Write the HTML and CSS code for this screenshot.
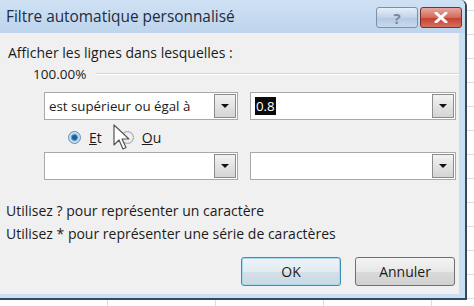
FILE: index.html
```html
<!DOCTYPE html>
<html lang="fr">

<head>
    <meta charset="UTF-8">
    <meta name="viewport" content="width=device-width, initial-scale=1.0">
    <title>Filtre automatique personnalisé</title>

    <link rel="stylesheet" href="styles.css">
</head>

<body>
    <div class="window">
        <div class="titlebar">
            <span class="title">Filtre automatique personnalisé</span>
            <div class="caption-btns">
                <button type="button" class="btn-help">?</button>
                <button type="button" class="btn-close">
                    <svg width="14" height="11" viewBox="0 0 14 11">
                        <path d="M2 1 L12 10 M12 1 L2 10" stroke="#fff" stroke-width="3" stroke-linecap="round" />
                    </svg>
                </button>
            </div>
        </div>

        <div class="dialog">
            <p class="intro">Afficher les lignes dans lesquelles :</p>

            <div class="group">
                <span class="group-label">100.00%</span>
                <span class="group-line"></span>
            </div>

            <div class="row">
                <div class="combo combo-left">
                    <span class="combo-value">est supérieur ou égal à</span>
                    <span class="combo-arrow"></span>
                </div>
                <div class="combo combo-right">
                    <span class="combo-value"><span class="selected">0.8</span></span>
                    <span class="combo-arrow"></span>
                </div>
            </div>

            <div class="logic">
                <label class="option">
                    <span class="radio checked"></span>
                    <span><u>E</u>t</span>
                </label>
                <label class="option">
                    <span class="radio"></span>
                    <span><u>O</u>u</span>
                </label>
                <!-- pointeur de la souris -->
                <svg class="cursor" width="18" height="27" viewBox="0 0 18 27">
                    <path d="M1 1 L1 21 L6 16 L10 25 L13 23.5 L9 15 L16 15 Z" fill="#fff" stroke="#555" stroke-width="1.2" stroke-linejoin="round" />
                </svg>
            </div>

            <div class="row row-second">
                <div class="combo combo-left">
                    <span class="combo-value"></span>
                    <span class="combo-arrow"></span>
                </div>
                <div class="combo combo-right">
                    <span class="combo-value"></span>
                    <span class="combo-arrow"></span>
                </div>
            </div>

            <p class="hint">Utilisez ? pour représenter un caractère</p>
            <p class="hint hint-second">Utilisez * pour représenter une série de caractères</p>

            <div class="actions">
                <button type="button" class="btn btn-default">OK</button>
                <button type="button" class="btn">Annuler</button>
            </div>
        </div>
    </div>
</body>

</html>
```

FILE: styles.css
```css
/* commun */
* {
    box-sizing: border-box;
}

body {
    margin: 0;
    width: 474px;
    height: 306px;
    overflow: hidden;
    background-color: #fff;
    background-image:
        linear-gradient(#dcdcdc 1px, transparent 1px),
        linear-gradient(90deg, #dcdcdc 1px, transparent 1px);
    background-size: 108px 24px;
    background-position: 107px 10px;
    font-family: "Open Sans", "Noto Sans", sans-serif;
    color: #1b1b1b;
}

p {
    margin: 0;
}

button {
    font-family: inherit;
    cursor: pointer;
}

/* fenetre */
.window {
    width: 467px;
    height: 300px;
    display: flex;
    flex-direction: column;
    background: #cadff3;
    border-right: 2px solid #34495c;
    border-bottom: 2px solid #34495c;
    border-top-right-radius: 6px;
    padding: 0 6px 4px 0;
}

.titlebar {
    height: 33px;
    margin-right: -6px;
    display: flex;
    align-items: center;
    justify-content: space-between;
    padding: 0 3px 0 6px;
    background: linear-gradient(#cfe1f4, #bdd4ec);
    border-top-right-radius: 6px;
}

.title {
    font-size: 15.4px;
    color: #1d2c3f;
}

.caption-btns {
    display: flex;
    gap: 2px;
    margin-top: 2px;
}

.btn-help,
.btn-close {
    height: 21px;
    padding: 0;
    border-radius: 3px;
    display: flex;
    align-items: center;
    justify-content: center;
}

.btn-help {
    width: 42px;
    border: 1px solid #7d90a8;
    background: linear-gradient(#e6eef8, #c3d3e6 50%, #b4c8df 51%, #c8d9ec);
    color: #7388a2;
    font-size: 15px;
    font-weight: bold;
}

.btn-close {
    width: 42px;
    border: 1px solid #7a3029;
    background: linear-gradient(#e8a79e, #d36a5d 50%, #c2402f 51%, #d5705f);
}

.dialog {
    flex: 1;
    display: flex;
    flex-direction: column;
    background: #f0f0f0;
    font-size: 14px;
}

.intro {
    margin: 11px 0 0 8px;
    line-height: 18px;
}

.group {
    display: flex;
    align-items: center;
    margin-top: 3px;
    padding-left: 33px;
    height: 18px;
    font-size: 13.5px;
}

.group-line {
    flex: 1;
    height: 2px;
    margin-left: 10px;
    border-top: 1px solid #d5d5d5;
    border-bottom: 1px solid #fff;
}

/* listes deroulantes */
.row {
    display: flex;
    gap: 12px;
    margin-top: 9px;
    padding-left: 44px;
}

.row-second {
    margin-top: 4px;
}

.combo {
    height: 28px;
    display: flex;
    background: #fff;
    border: 1px solid #a9a9a9;
    padding: 1px;
}

.combo-left {
    width: 194px;
}

.combo-right {
    width: 206px;
}

.combo-value {
    flex: 1;
    display: flex;
    align-items: center;
    padding-left: 3px;
    font-size: 13.3px;
    white-space: nowrap;
    overflow: hidden;
}

.selected {
    background: #0b0b0b;
    color: #fff;
    padding: 0 1px;
}

.combo-arrow {
    width: 22px;
    border: 1px solid #8c8c8c;
    background: linear-gradient(#f2f2f2, #d4d4d4);
    display: flex;
    align-items: center;
    justify-content: center;
}

.combo-arrow::after {
    content: "";
    border-left: 4px solid transparent;
    border-right: 4px solid transparent;
    border-top: 4px solid #111;
}

/* et / ou */
.logic {
    position: relative;
    height: 22px;
    margin-top: 6px;
    display: flex;
    align-items: center;
    gap: 19px;
    padding-left: 68px;
    font-size: 14px;
}

.option {
    display: flex;
    align-items: center;
    gap: 8px;
}

.radio {
    width: 13px;
    height: 13px;
    border-radius: 50%;
    border: 1px solid #9aa3ad;
    background: radial-gradient(#fff, #dcdcdc);
}

.radio.checked {
    border-color: #5b8fbc;
    background: radial-gradient(#1f5f96 0 2px, #4f9ad2 3px, #b9d7ee 4px, #eef4f8);
}

.cursor {
    position: absolute;
    left: 113px;
    top: -2px;
}

/* aide */
.hint {
    margin-left: 6px;
    line-height: 20px;
    margin-top: 21px;
}

.hint-second {
    margin-top: 3px;
}

/* boutons */
.actions {
    display: flex;
    justify-content: flex-end;
    gap: 14px;
    margin-top: 13px;
    padding-right: 4px;
}

.btn {
    width: 100px;
    height: 29px;
    border: 1px solid #707070;
    border-radius: 3px;
    background: linear-gradient(#f4f4f4, #e7e7e7 50%, #dadada 51%, #d0d0d0);
    font-size: 14px;
    color: #1b1b1b;
}

.btn-default {
    border-color: #3c8fbd;
    box-shadow: inset 0 0 0 1px #a8d8ef;
    background: linear-gradient(#eef4f8, #e2ebf1 50%, #d3e0e9 51%, #cbd9e3);
}
```
